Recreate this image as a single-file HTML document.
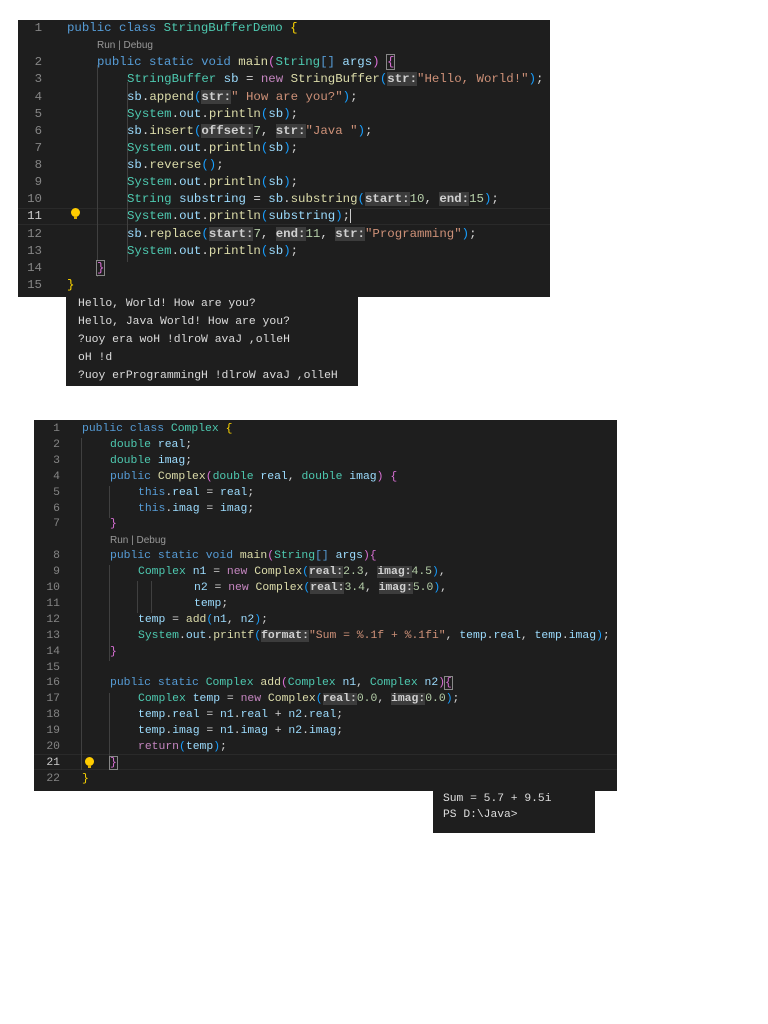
<!DOCTYPE html>
<html><head><meta charset="utf-8"><style>
body{margin:0;width:768px;height:1024px;background:#fff;position:relative;overflow:hidden}
.ed{position:absolute;background:#1e1e1e;font-family:"Liberation Mono",monospace;white-space:pre;color:#d4d4d4}
.r{position:absolute;left:0;right:0}
.n{position:absolute;text-align:right;color:#858585}
.c{position:absolute}
.k{color:#569cd6}.t{color:#4ec9b0}.s{color:#ce9178}.m{color:#dcdcaa}.v{color:#9cdcfe}.nu{color:#b5cea8}
.y{color:#ffd700}.p{color:#da70d6}.pk{color:#c586c0}.g{color:#179fff}
.h{background:#3c3c3c;color:#d0d0d0;font-weight:bold}
.rd{font-family:"Liberation Sans",sans-serif;color:#999;font-size:10px}
.cur{background:#1e1e1e;outline:1px solid #888}
.hl{position:absolute;left:0;right:0;border-top:1px solid #2a2a2a;border-bottom:1px solid #2a2a2a}
.bulb{position:absolute;width:9px;height:9px;background:#ffcc00;border-radius:50%}
.bulb:after{content:"";position:absolute;left:3px;top:8px;width:3px;height:3px;background:#e0b000}
.out{position:absolute;background:#1e1e1e;color:#ddd;font-family:"Liberation Mono",monospace;white-space:pre}
.guide{position:absolute;width:1px;background:#404040}
</style></head><body>

<div class="ed" style="left:18px;top:20px;width:532px;height:277px;font-size:12.4px;line-height:17.13px">
 <div class="hl" style="top:188px;height:15px"></div>
 <div class="guide" style="left:79px;top:45px;height:212px"></div>
 <div class="guide" style="left:109px;top:62px;height:180px"></div>
 <div class="bulb" style="left:53px;top:188px"></div>
 <div class="r" style="top:0"><span class="n" style="right:508px">1</span><span class="c" style="left:49px"><span class="k">public class</span> <span class="t">StringBufferDemo</span> <span class="y">{</span></span></div>
 <div class="r" style="top:17.13px"><span class="c rd" style="left:79px;line-height:17px">Run | Debug</span></div>
 <div class="r" style="top:34.26px"><span class="n" style="right:508px">2</span><span class="c" style="left:79px"><span class="k">public static void</span> <span class="m">main</span><span class="p">(</span><span class="t">String</span><span class="k">[]</span> <span class="v">args</span><span class="p">)</span> <span class="p cur">{</span></span></div>
 <div class="r" style="top:51.39px"><span class="n" style="right:508px">3</span><span class="c" style="left:109px"><span class="t">StringBuffer</span> <span class="v">sb</span> = <span class="pk">new</span> <span class="m">StringBuffer</span><span class="g">(</span><span class="h">str:</span><span class="s">"Hello, World!"</span><span class="g">)</span>;</span></div>
 <div class="r" style="top:68.52px"><span class="n" style="right:508px">4</span><span class="c" style="left:109px"><span class="v">sb</span>.<span class="m">append</span><span class="g">(</span><span class="h">str:</span><span class="s">" How are you?"</span><span class="g">)</span>;</span></div>
 <div class="r" style="top:85.65px"><span class="n" style="right:508px">5</span><span class="c" style="left:109px"><span class="t">System</span>.<span class="v">out</span>.<span class="m">println</span><span class="g">(</span><span class="v">sb</span><span class="g">)</span>;</span></div>
 <div class="r" style="top:102.78px"><span class="n" style="right:508px">6</span><span class="c" style="left:109px"><span class="v">sb</span>.<span class="m">insert</span><span class="g">(</span><span class="h">offset:</span><span class="nu">7</span>, <span class="h">str:</span><span class="s">"Java "</span><span class="g">)</span>;</span></div>
 <div class="r" style="top:119.91px"><span class="n" style="right:508px">7</span><span class="c" style="left:109px"><span class="t">System</span>.<span class="v">out</span>.<span class="m">println</span><span class="g">(</span><span class="v">sb</span><span class="g">)</span>;</span></div>
 <div class="r" style="top:137.04px"><span class="n" style="right:508px">8</span><span class="c" style="left:109px"><span class="v">sb</span>.<span class="m">reverse</span><span class="g">()</span>;</span></div>
 <div class="r" style="top:154.17px"><span class="n" style="right:508px">9</span><span class="c" style="left:109px"><span class="t">System</span>.<span class="v">out</span>.<span class="m">println</span><span class="g">(</span><span class="v">sb</span><span class="g">)</span>;</span></div>
 <div class="r" style="top:171.3px"><span class="n" style="right:508px">10</span><span class="c" style="left:109px"><span class="t">String</span> <span class="v">substring</span> = <span class="v">sb</span>.<span class="m">substring</span><span class="g">(</span><span class="h">start:</span><span class="nu">10</span>, <span class="h">end:</span><span class="nu">15</span><span class="g">)</span>;</span></div>
 <div class="r" style="top:188.43px"><span class="n" style="right:508px;color:#ccc">11</span><span class="c" style="left:109px"><span class="t">System</span>.<span class="v">out</span>.<span class="m">println</span><span class="g">(</span><span class="v">substring</span><span class="g">)</span>;<span style="border-left:1px solid #ccc"></span></span></div>
 <div class="r" style="top:205.56px"><span class="n" style="right:508px">12</span><span class="c" style="left:109px"><span class="v">sb</span>.<span class="m">replace</span><span class="g">(</span><span class="h">start:</span><span class="nu">7</span>, <span class="h">end:</span><span class="nu">11</span>, <span class="h">str:</span><span class="s">"Programming"</span><span class="g">)</span>;</span></div>
 <div class="r" style="top:222.69px"><span class="n" style="right:508px">13</span><span class="c" style="left:109px"><span class="t">System</span>.<span class="v">out</span>.<span class="m">println</span><span class="g">(</span><span class="v">sb</span><span class="g">)</span>;</span></div>
 <div class="r" style="top:239.82px"><span class="n" style="right:508px">14</span><span class="c" style="left:79px"><span class="p cur">}</span></span></div>
 <div class="r" style="top:256.95px"><span class="n" style="right:508px">15</span><span class="c" style="left:49px"><span class="y">}</span></span></div>
</div>

<div class="out" style="left:66px;top:294px;width:292px;height:92px;font-size:11.4px;line-height:18px">
<div style="position:absolute;left:12px;top:1px">Hello, World! How are you?
Hello, Java World! How are you?
?uoy era woH !dlroW avaJ ,olleH
oH !d
?uoy erProgrammingH !dlroW avaJ ,olleH</div></div>

<div class="ed" style="left:34px;top:420px;width:583px;height:371px;font-size:11.4px;line-height:15.9px">
 <div class="hl" style="top:334px;height:14px"></div>
 <div class="guide" style="left:47px;top:18px;height:332px"></div>
 <div class="guide" style="left:75px;top:66px;height:32px"></div>
 <div class="guide" style="left:75px;top:145px;height:96px"></div>
 <div class="guide" style="left:75px;top:273px;height:64px"></div>
 <div class="guide" style="left:103px;top:161px;height:32px"></div>
 <div class="guide" style="left:117px;top:161px;height:32px"></div>
 <div class="bulb" style="left:51px;top:337px"></div>
 <div class="r" style="top:2px"><span class="n" style="right:557px">1</span><span class="c" style="left:48px"><span class="k">public class</span> <span class="t">Complex</span> <span class="y">{</span></span></div>
 <div class="r" style="top:17.9px"><span class="n" style="right:557px">2</span><span class="c" style="left:76px"><span class="t">double</span> <span class="v">real</span>;</span></div>
 <div class="r" style="top:33.8px"><span class="n" style="right:557px">3</span><span class="c" style="left:76px"><span class="t">double</span> <span class="v">imag</span>;</span></div>
 <div class="r" style="top:49.7px"><span class="n" style="right:557px">4</span><span class="c" style="left:76px"><span class="k">public</span> <span class="m">Complex</span><span class="p">(</span><span class="t">double</span> <span class="v">real</span>, <span class="t">double</span> <span class="v">imag</span><span class="p">)</span> <span class="p">{</span></span></div>
 <div class="r" style="top:65.6px"><span class="n" style="right:557px">5</span><span class="c" style="left:104px"><span class="k">this</span>.<span class="v">real</span> = <span class="v">real</span>;</span></div>
 <div class="r" style="top:81.5px"><span class="n" style="right:557px">6</span><span class="c" style="left:104px"><span class="k">this</span>.<span class="v">imag</span> = <span class="v">imag</span>;</span></div>
 <div class="r" style="top:97.4px"><span class="n" style="right:557px">7</span><span class="c" style="left:76px"><span class="p">}</span></span></div>
 <div class="r" style="top:113.3px"><span class="c rd" style="left:76px;line-height:16px">Run | Debug</span></div>
 <div class="r" style="top:129.2px"><span class="n" style="right:557px">8</span><span class="c" style="left:76px"><span class="k">public static void</span> <span class="m">main</span><span class="p">(</span><span class="t">String</span><span class="k">[]</span> <span class="v">args</span><span class="p">){</span></span></div>
 <div class="r" style="top:145.1px"><span class="n" style="right:557px">9</span><span class="c" style="left:104px"><span class="t">Complex</span> <span class="v">n1</span> = <span class="pk">new</span> <span class="m">Complex</span><span class="g">(</span><span class="h">real:</span><span class="nu">2.3</span>, <span class="h">imag:</span><span class="nu">4.5</span><span class="g">)</span>,</span></div>
 <div class="r" style="top:161px"><span class="n" style="right:557px">10</span><span class="c" style="left:160px"><span class="v">n2</span> = <span class="pk">new</span> <span class="m">Complex</span><span class="g">(</span><span class="h">real:</span><span class="nu">3.4</span>, <span class="h">imag:</span><span class="nu">5.0</span><span class="g">)</span>,</span></div>
 <div class="r" style="top:176.9px"><span class="n" style="right:557px">11</span><span class="c" style="left:160px"><span class="v">temp</span>;</span></div>
 <div class="r" style="top:192.8px"><span class="n" style="right:557px">12</span><span class="c" style="left:104px"><span class="v">temp</span> = <span class="m">add</span><span class="g">(</span><span class="v">n1</span>, <span class="v">n2</span><span class="g">)</span>;</span></div>
 <div class="r" style="top:208.7px"><span class="n" style="right:557px">13</span><span class="c" style="left:104px"><span class="t">System</span>.<span class="v">out</span>.<span class="m">printf</span><span class="g">(</span><span class="h">format:</span><span class="s">"Sum = %.1f + %.1fi"</span>, <span class="v">temp</span>.<span class="v">real</span>, <span class="v">temp</span>.<span class="v">imag</span><span class="g">)</span>;</span></div>
 <div class="r" style="top:224.6px"><span class="n" style="right:557px">14</span><span class="c" style="left:76px"><span class="p">}</span></span></div>
 <div class="r" style="top:240.5px"><span class="n" style="right:557px">15</span></div>
 <div class="r" style="top:256.4px"><span class="n" style="right:557px">16</span><span class="c" style="left:76px"><span class="k">public static</span> <span class="t">Complex</span> <span class="m">add</span><span class="p">(</span><span class="t">Complex</span> <span class="v">n1</span>, <span class="t">Complex</span> <span class="v">n2</span><span class="p">)</span><span class="p cur">{</span></span></div>
 <div class="r" style="top:272.3px"><span class="n" style="right:557px">17</span><span class="c" style="left:104px"><span class="t">Complex</span> <span class="v">temp</span> = <span class="pk">new</span> <span class="m">Complex</span><span class="g">(</span><span class="h">real:</span><span class="nu">0.0</span>, <span class="h">imag:</span><span class="nu">0.0</span><span class="g">)</span>;</span></div>
 <div class="r" style="top:288.2px"><span class="n" style="right:557px">18</span><span class="c" style="left:104px"><span class="v">temp</span>.<span class="v">real</span> = <span class="v">n1</span>.<span class="v">real</span> + <span class="v">n2</span>.<span class="v">real</span>;</span></div>
 <div class="r" style="top:304.1px"><span class="n" style="right:557px">19</span><span class="c" style="left:104px"><span class="v">temp</span>.<span class="v">imag</span> = <span class="v">n1</span>.<span class="v">imag</span> + <span class="v">n2</span>.<span class="v">imag</span>;</span></div>
 <div class="r" style="top:320px"><span class="n" style="right:557px">20</span><span class="c" style="left:104px"><span class="pk">return</span><span class="g">(</span><span class="v">temp</span><span class="g">)</span>;</span></div>
 <div class="r" style="top:335.9px"><span class="n" style="right:557px;color:#ccc">21</span><span class="c" style="left:76px"><span class="p cur">}</span></span></div>
 <div class="r" style="top:351.8px"><span class="n" style="right:557px">22</span><span class="c" style="left:48px"><span class="y">}</span></span></div>
</div>

<div class="out" style="left:433px;top:791px;width:162px;height:42px;font-size:11.3px;line-height:16px">
<div style="position:absolute;left:10px;top:0px">Sum = 5.7 + 9.5i
PS D:\Java&gt;</div></div>

</body></html>
